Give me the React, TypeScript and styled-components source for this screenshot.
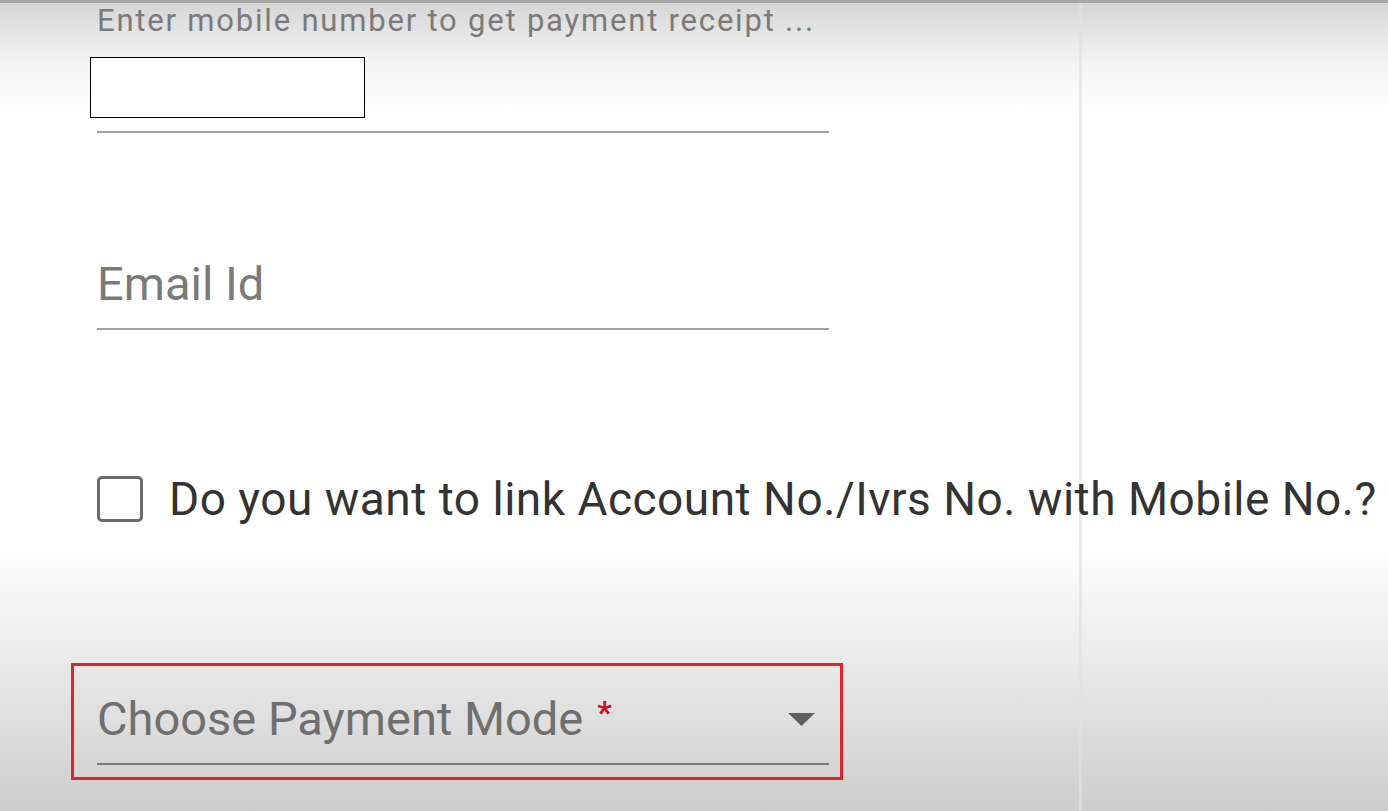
import React from "react";
import styled, { createGlobalStyle } from "styled-components";

const GlobalStyle = createGlobalStyle`
  html, body {
    margin: 0;
    padding: 0;
  }
  body {
    font-family: Roboto, "Liberation Sans", Arial, sans-serif;
  }
`;

const Page = styled.div`
  min-height: 811px;
  box-sizing: border-box;
  border-top: 3px solid #a9a9a9;
  overflow: hidden;
  display: grid;
  grid-template-columns: 1082px 1fr;
  background: linear-gradient(
    to bottom,
    #d6d6d6 0px,
    #f4f4f4 60px,
    #ffffff 110px,
    #ffffff 540px,
    #ededed 640px,
    #dedede 720px,
    #cdcdcd 808px
  );
`;

const Main = styled.main`
  border-right: 3px solid rgba(225, 225, 225, 0.7);
  padding-left: 97px;
`;

const Side = styled.aside``;

const Form = styled.form`
  width: 732px;
  display: flex;
  flex-direction: column;
`;

const HintLabel = styled.label`
  display: block;
  font-size: 31px;
  letter-spacing: 1.8px;
  line-height: 36px;
  color: #7a7a7a;
  white-space: nowrap;
`;

const Redacted = styled.div`
  margin: 18px 0 0 -7px;
  width: 275px;
  height: 61px;
  box-sizing: border-box;
  background: #ffffff;
  border: 1px solid #000000;
`;

type LineProps = { $tone?: string; $gap: number };
const Underline = styled.div<LineProps>`
  height: 2px;
  margin-top: ${({ $gap }) => $gap}px;
  background: ${({ $tone }) => $tone ?? "#a3a3a3"};
`;

const Placeholder = styled.div<{ $gap: number; $tone?: string }>`
  margin-top: ${({ $gap }) => $gap}px;
  font-size: 47px;
  line-height: 56px;
  height: 56px;
  color: ${({ $tone }) => $tone ?? "#7a7a7a"};
  white-space: nowrap;
`;

const CheckRow = styled.label`
  margin-top: 142px;
  display: flex;
  align-items: center;
  gap: 26px;
  white-space: nowrap;
`;

const Box = styled.span`
  flex: none;
  width: 46px;
  height: 46px;
  box-sizing: border-box;
  border: 3px solid #6b6b6b;
  border-radius: 5px;
`;

const CheckText = styled.span`
  font-size: 46px;
  letter-spacing: 0.5px;
  line-height: 54px;
  color: #333333;
`;

const Highlight = styled.div`
  margin: 137px 0 0 -26px;
  width: 772px;
  height: 117px;
  box-sizing: border-box;
  border: 3px solid #e0242f;
  padding: 25px 11px 0 23px;
`;

const SelectRow = styled.div`
  display: flex;
  align-items: center;
  justify-content: space-between;
`;

const Required = styled.span`
  display: inline-block;
  color: #c8102e;
  font-size: 32px;
  font-weight: 700;
  line-height: 0;
  vertical-align: 12px;
  margin-left: 14px;
`;

const Caret = styled.svg`
  margin-right: 14px;
  flex: none;
`;

export default function App() {
  return (
    <>
      <GlobalStyle />
      <Page>
        <Main>
          <Form>
            <HintLabel>Enter mobile number to get payment receipt ...</HintLabel>
            <Redacted />
            <Underline $gap={13} />

            <Placeholder $gap={123}>Email Id</Placeholder>
            <Underline $gap={16} />

            <CheckRow>
              <Box />
              <CheckText>
                Do you want to link Account No./Ivrs No. with Mobile No.?
              </CheckText>
            </CheckRow>

            <Highlight>
              <SelectRow>
                <Placeholder $gap={0} $tone="#6f6f6f">
                  Choose Payment Mode<Required>*</Required>
                </Placeholder>
                <Caret width="27" height="13" viewBox="0 0 27 13">
                  <path d="M0 0 L27 0 L13.5 13 Z" fill="#5f5f5f" />
                </Caret>
              </SelectRow>
              <Underline $gap={16} $tone="#7b7b7b" />
            </Highlight>
          </Form>
        </Main>
        <Side />
      </Page>
    </>
  );
}
